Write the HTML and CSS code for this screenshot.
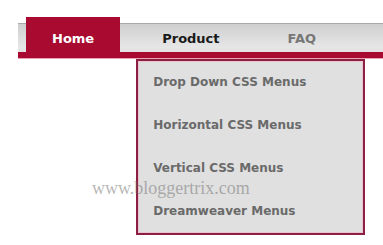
FILE: index.html
```html
<!DOCTYPE html>
<html>
<head>
<meta charset="utf-8">
<link rel="stylesheet" href="styles.css">
</head>
<body>
<nav class="menubar">
  <ul class="menu">
    <li class="item active">Home</li>
    <li class="item product">Product
      <ul class="dropdown">
        <li>Drop Down CSS Menus</li>
        <li>Horizontal CSS Menus</li>
        <li>Vertical CSS Menus</li>
        <li>Dreamweaver Menus</li>
      </ul>
    </li>
    <li class="item faq">FAQ</li>
  </ul>
</nav>
<div class="watermark">www.bloggertrix.com</div>
</body>
</html>
```
FILE: styles.css
```css
html, body {
  margin: 0;
  padding: 0;
  background: #ffffff;
}
body {
  width: 383px;
  height: 245px;
  overflow: hidden;
  font-family: "DejaVu Sans", Verdana, sans-serif;
}
.menubar {
  margin: 17px 0 0 18px;
  height: 42px;
  background: linear-gradient(to bottom,
    transparent 0, transparent 6px,
    #a8a8a8 6px, #a8a8a8 7px,
    #cfcfcf 7px, #e6e6e6 30px, #e2e2e2 35px,
    #a80a30 35px, #a80a30 41px,
    #e7a3b3 41px, #e7a3b3 42px);
}
.menu {
  list-style: none;
  margin: 0;
  padding: 0 0 0 8px;
  display: flex;
  gap: 16px;
}
.item {
  height: 35px;
  box-sizing: border-box;
  padding: 9px 26px 0;
  line-height: 26px;
  font-size: 13px;
  font-weight: bold;
  color: #1a1a1a;
  white-space: nowrap;
}
.active {
  background: #a80a30;
  color: #ffffff;
}
.faq {
  color: #777777;
}
.product {
  position: relative;
}
.dropdown {
  position: absolute;
  top: 42px;
  left: 0;
  width: 225px;
  margin: 0;
  padding: 0;
  list-style: none;
  background: #e0e0e0;
  border: 2px solid #8c1f42;
  box-shadow: inset 0 0 0 1px #e9c3cf;
}
.dropdown li {
  padding-left: 15px;
  line-height: 43px;
  font-size: 12px;
  font-weight: bold;
  color: #6a6a6a;
}
.watermark {
  position: absolute;
  left: 92px;
  top: 179px;
  font-family: "Liberation Serif", "Times New Roman", serif;
  font-size: 18px;
  line-height: 18px;
  color: rgba(110, 110, 110, 0.5);
}
```
